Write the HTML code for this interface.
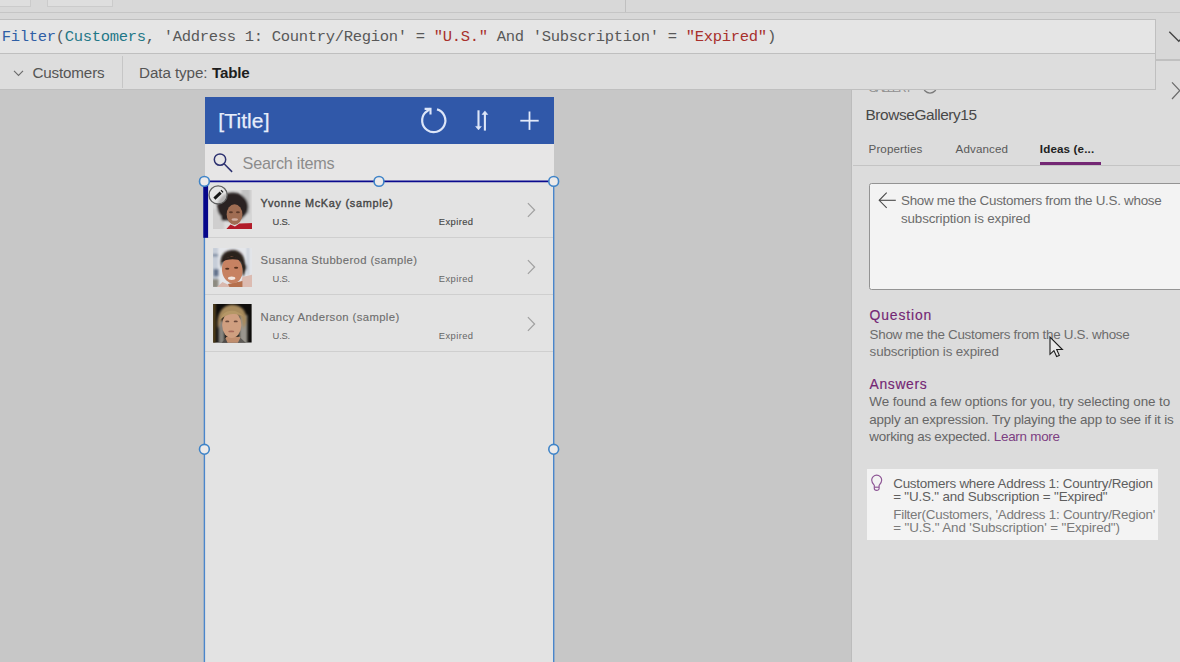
<!DOCTYPE html>
<html lang="en">
<head>
<meta charset="utf-8">
<title>Power Apps Studio - Ideas</title>
<style>
html,body{margin:0;padding:0;overflow:hidden}
body{width:1180px;height:662px;background:#c7c7c7}
#app{position:relative;width:1180px;height:662px;overflow:hidden;background:#c7c7c7;font-family:"Liberation Sans",sans-serif}
.t{position:absolute;white-space:pre;line-height:1;margin:0;padding:0}
.m{font-family:"Liberation Mono",monospace}
.a{position:absolute;box-sizing:border-box}
svg{position:absolute;overflow:visible}
#canvas{left:0;top:89px;width:853px;height:573px;background:#c7c7c7}
#phone{left:205px;top:96.5px;width:348.5px;height:566px;background:#e3e3e3}
#phead{left:0;top:0;width:348.5px;height:47.5px;background:#3058a9}
#psearch{left:0;top:47.5px;width:348.5px;height:37px;background:#e7e6e6}
.sep{left:0;width:348.5px;height:1px;background:#cfcfcf}
#rpanel{left:851.4px;top:60px;width:330px;height:602px;background:#dcdcdc;border-left:1.6px solid #bcbcbc}
#tabline{left:853px;top:164.5px;width:327px;height:1px;background:#c4c4c4}
#tabul{left:1040px;top:162px;width:60.6px;height:3px;background:#742774}
#qbox{left:869.2px;top:182.6px;width:320px;height:107.7px;background:#f3f3f3;border:1.6px solid #939393;border-radius:2.5px}
#card{left:866.5px;top:469px;width:291.5px;height:71px;background:#f3f3f3}
#topstrip{left:0;top:0;width:1180px;height:60px;background:#d8d8d8}
#topline{left:0;top:12px;width:1180px;height:1px;background:#c5c5c5}
#topdiv{left:625.2px;top:0;width:1px;height:12px;background:#c0c0c0}
.tab{top:-1px;height:7.5px;background:#dedede;border:1px solid #cbcbcb}
#fbar{left:-2px;top:19.2px;width:1157.5px;height:34.6px;background:#e5e5e5;border:1.4px solid #bfbfbf}
#sbar{left:-2px;top:52.6px;width:1157.5px;height:37.8px;background:#dddddd;border:1.4px solid #bfbfbf}
#sdiv{left:121.7px;top:56px;width:1px;height:32px;background:#c6c6c6}
#rline{left:1155px;top:59.4px;width:25px;height:1.3px;background:#c0c0c0}
#formula{left:1.7px;top:29.7px;font-family:"Liberation Mono",monospace;font-size:15.5px;letter-spacing:-0.3px;color:#585858}
</style>
</head>
<body>
<div id="app">
<!-- design canvas -->
<div class="a" id="canvas"></div>

<!-- phone preview -->
<div class="a" id="phone">
  <div class="a" id="phead"></div>
  <div class="a" id="psearch"></div>
  <div class="a sep" style="top:140.5px"></div>
  <div class="a sep" style="top:197.5px"></div>
  <div class="a sep" style="top:254.5px"></div>
</div>
<!-- avatars -->
<svg style="left:213.2px;top:190.3px" width="38.9" height="38.9" viewBox="0 0 39 39">
  <defs>
    <filter id="bl1" x="-10%" y="-10%" width="120%" height="120%"><feGaussianBlur stdDeviation="0.7"/></filter>
    <filter id="bl2" x="-10%" y="-10%" width="120%" height="120%"><feGaussianBlur stdDeviation="1.1"/></filter>
    <clipPath id="cp"><rect x="0" y="0" width="39" height="39"/></clipPath>
  </defs>
  <g clip-path="url(#cp)">
    <rect width="39" height="39" fill="#dddcdc"/>
    <g filter="url(#bl2)">
      <rect x="28.5" y="-2" width="9" height="33" fill="#c2c2c2"/>
      <rect x="-2" y="19" width="13" height="22" fill="#cfcece"/>
      <rect x="30" y="24" width="10" height="9" fill="#d6d6d6"/>
      <ellipse cx="19.8" cy="17" rx="15.6" ry="14.4" fill="#2a2321"/>
      <ellipse cx="11" cy="27" rx="3" ry="4" fill="#2a2321"/>
    </g>
    <g filter="url(#bl1)">
      <ellipse cx="21.6" cy="24.6" rx="7.9" ry="10.4" fill="#a06d52"/>
      <ellipse cx="18" cy="22.3" rx="2" ry="0.9" fill="#5d3a2c"/>
      <ellipse cx="25" cy="22.3" rx="2" ry="0.9" fill="#5d3a2c"/>
      <ellipse cx="21.8" cy="29.6" rx="3.2" ry="1.3" fill="#d2b0a4"/>
      <path d="M12.5 40 L17.5 34.5 L22 36.5 L26.5 33.6 L40 33 L40 40 Z" fill="#b21f29"/>
    </g>
  </g>
</svg>
<svg style="left:213.2px;top:247.5px" width="38.9" height="38.9" viewBox="0 0 39 39">
  <g clip-path="url(#cp)">
    <rect width="39" height="39" fill="#e4e6ea"/>
    <g filter="url(#bl2)">
      <rect x="-1" y="-1" width="6" height="41" fill="#c6cdd8"/>
      <rect x="-1" y="6" width="6" height="2.5" fill="#7c8aa0"/>
      <rect x="0.5" y="21" width="5" height="7.5" fill="#5f708a"/>
      <rect x="-1" y="31" width="6.5" height="9" fill="#8c8a80"/>
      <rect x="34" y="-1" width="2.2" height="28" fill="#c6cdd8"/>
      <path d="M8.5 20 C5 8 12 1.5 20.5 2 C28.5 2.5 31.5 9 32.5 16 C34.3 18 34 22 32.3 23 C32 26 31 28 30 28.5 L27 14 L10 14 Z" fill="#2c211f"/>
    </g>
    <g filter="url(#bl1)">
      <path d="M3 40 L9.5 34 L16 37 L22 40 Z" fill="#d9b8ae"/>
      <path d="M27 40 L29.5 29 L40 26.5 L40 40 Z" fill="#dcbbb1"/>
      <path d="M15 36 L29.5 33 L29.5 40 L17 40 Z" fill="#b5704e"/>
      <ellipse cx="19.3" cy="22" rx="10.3" ry="13.4" fill="#c78262" transform="rotate(-7 19.3 22)"/>
      <path d="M8.5 14 C12 7.5 25 6.5 30 13.5 C24.5 10.5 14 10.5 8.5 14Z" fill="#2c211f"/>
      <ellipse cx="18.7" cy="30.3" rx="3.7" ry="1.7" fill="#f1e6e0"/>
      <ellipse cx="14.3" cy="20.8" rx="2.1" ry="0.9" fill="#56301f"/>
      <ellipse cx="23.2" cy="19.8" rx="2.1" ry="0.9" fill="#56301f"/>
    </g>
  </g>
</svg>
<svg style="left:213.2px;top:304.2px" width="38.9" height="38.7" viewBox="0 0 39 39">
  <g clip-path="url(#cp)">
    <rect width="39" height="39" fill="#0f0d0b"/>
    <g filter="url(#bl2)">
      <rect x="-1" y="-1" width="3.6" height="41" fill="#54421c"/>
      <rect x="5.5" y="17" width="6" height="23" fill="#86847f"/>
      <rect x="26.5" y="11" width="8" height="29" fill="#9a968e"/>
      <path d="M5 25 C3 9 10 0.5 20 0.8 C29.5 1.2 34 8 33.5 17 C33.3 20 32 23 30.5 25 L28 12 L9.5 13 Z" fill="#a88b5d"/>
    </g>
    <g filter="url(#bl1)">
      <path d="M9 40 L13.5 33 L27 33 L30 40 Z" fill="#c08e6e"/>
      <path d="M8 40 L12.5 34.5 L15 40 Z" fill="#4f4c49"/>
      <path d="M24.5 40 L27.5 34 L34 40 Z" fill="#5f5c58"/>
      <ellipse cx="18.8" cy="21.2" rx="9.7" ry="13.2" fill="#cf9f80"/>
      <path d="M7 16 C9.5 5.5 23 3.5 31 12.5 C25 8.5 13 9 7 16Z" fill="#b59766"/>
      <ellipse cx="14.3" cy="17.6" rx="2.1" ry="0.9" fill="#6b4a3a"/>
      <ellipse cx="22.8" cy="17.6" rx="2.1" ry="0.9" fill="#6b4a3a"/>
      <ellipse cx="18.3" cy="27.6" rx="3.1" ry="0.9" fill="#a86a5a"/>
    </g>
  </g>
</svg>

<span class="t" id="ph_title" style="left:218.30px;top:110.35px;font-size:21px;color:#e6edfb;letter-spacing:0.105px;-webkit-text-stroke:0.25px #e6edfb;">[Title]</span>
<span class="t" id="ph_search" style="left:242.60px;top:155.13px;font-size:16.2px;color:#8c8c8c;letter-spacing:-0.222px;">Search items</span>
<span class="t" id="ph_n1" style="left:260.60px;top:197.94px;font-size:10.9px;color:#474747;letter-spacing:0.703px;-webkit-text-stroke:0.38px #474747;">Yvonne McKay (sample)</span>
<span class="t" id="ph_n2" style="left:260.60px;top:255.40px;font-size:11.3px;color:#6e6e6e;letter-spacing:0.379px;-webkit-text-stroke:0.12px #6e6e6e;">Susanna Stubberod (sample)</span>
<span class="t" id="ph_n3" style="left:260.60px;top:312.19px;font-size:11.3px;color:#6e6e6e;letter-spacing:0.392px;-webkit-text-stroke:0.12px #6e6e6e;">Nancy Anderson (sample)</span>
<span class="t" id="ph_us0" style="left:272.60px;top:217.01px;font-size:9.4px;color:#474747;letter-spacing:-0.209px;-webkit-text-stroke:0.15px #474747;">U.S.</span>
<span class="t" id="ph_ex0" style="left:438.80px;top:217.01px;font-size:9.4px;color:#474747;letter-spacing:0.415px;-webkit-text-stroke:0.15px #474747;">Expired</span>
<span class="t" id="ph_us1" style="left:272.60px;top:273.81px;font-size:9.4px;color:#666;letter-spacing:-0.209px;">U.S.</span>
<span class="t" id="ph_ex1" style="left:438.80px;top:273.81px;font-size:9.4px;color:#666;letter-spacing:0.415px;">Expired</span>
<span class="t" id="ph_us2" style="left:272.60px;top:330.61px;font-size:9.4px;color:#666;letter-spacing:-0.209px;">U.S.</span>
<span class="t" id="ph_ex2" style="left:438.80px;top:330.61px;font-size:9.4px;color:#666;letter-spacing:0.415px;">Expired</span>
<!-- phone header / search / list icons and selection adorners -->
<svg style="left:0;top:0" width="1180" height="662" viewBox="0 0 1180 662">
  <!-- refresh -->
  <g fill="none" stroke="#dde6f8" stroke-width="2.2" stroke-linecap="butt">
    <path d="M437.0 109.4 A11.6 11.6 0 1 1 425.3 112.6 L430.3 108.6"/>
    <path d="M424.6 108.9 L430.5 108.9 L430.5 114.6" stroke-width="2.1"/>
  </g>
  <!-- sort -->
  <g stroke="#dde6f8" stroke-width="2.1" fill="#dde6f8">
    <line x1="478.5" y1="110.3" x2="478.5" y2="127.5"/>
    <path d="M475.6 126.4 L481.4 126.4 L478.5 129.9 Z" stroke-width="0.5"/>
    <line x1="484.9" y1="113.5" x2="484.9" y2="130.6"/>
    <path d="M482.0 114.5 L487.8 114.5 L484.9 110.9 Z" stroke-width="0.5"/>
  </g>
  <!-- plus -->
  <g stroke="#e3eafa" stroke-width="1.8">
    <line x1="520.3" y1="120.7" x2="538.7" y2="120.7"/>
    <line x1="529.5" y1="111.5" x2="529.5" y2="129.9"/>
  </g>
  <!-- search -->
  <g fill="none" stroke="#2d3270" stroke-width="1.5">
    <circle cx="220" cy="159.6" r="5.7"/>
    <line x1="224.1" y1="163.8" x2="232.1" y2="171.9"/>
  </g>
  <!-- row chevrons -->
  <g fill="none" stroke="#a0a0a0" stroke-width="1.2">
    <path d="M527.9 203.2 L534.6 210 L527.9 216.8"/>
    <path d="M527.9 260.2 L534.6 267 L527.9 273.8"/>
    <path d="M527.9 317.2 L534.6 324 L527.9 330.8"/>
  </g>
  <!-- selection -->
  <g stroke="#4a86cb" stroke-width="1.4">
    <line x1="204.4" y1="181" x2="204.4" y2="662"/>
    <line x1="553.7" y1="181" x2="553.7" y2="662"/>
  </g>
  <rect x="203.3" y="182" width="4.8" height="55.8" fill="#06068a"/>
  <line x1="204" y1="181.4" x2="554" y2="181.4" stroke="#0a0a8e" stroke-width="1.7"/>
  <g fill="#eceaea" stroke="#3f84c8" stroke-width="1.6">
    <circle cx="204.4" cy="181.4" r="4.9"/>
    <circle cx="379" cy="181.4" r="4.9"/>
    <circle cx="553.7" cy="181.4" r="4.9"/>
    <circle cx="204.4" cy="449.3" r="4.9"/>
    <circle cx="553.7" cy="449.3" r="4.9"/>
  </g>
  <!-- edit pencil -->
  <circle cx="218.1" cy="194.9" r="9.1" fill="#e8e8e8" fill-opacity="0.72" stroke="#606060" stroke-width="1.3"/>
  <path d="M214.4 198.6 L220.7 192.6" stroke="#151515" stroke-width="2.9" fill="none"/>
  <path d="M221.6 191.8 L222.5 190.9" stroke="#151515" stroke-width="2.9" fill="none"/>
</svg>


<!-- right properties panel -->
<div class="a" id="rpanel"></div>
<div class="a" id="tabline"></div>
<div class="a" id="tabul"></div>
<div class="a" id="qbox"></div>
<div class="a" id="card"></div>
<span class="t" id="rp_gal" style="left:868.50px;top:83.22px;font-size:11.5px;color:#8e8e8e;letter-spacing:-1.480px;">GALLERY</span>
<span class="t" id="rp_name" style="left:865.50px;top:106.61px;font-size:15.4px;color:#484848;letter-spacing:-0.400px;">BrowseGallery15</span>
<span class="t" id="rp_tab1" style="left:868.60px;top:143.04px;font-size:11.6px;color:#5a5a5a;letter-spacing:0.086px;">Properties</span>
<span class="t" id="rp_tab2" style="left:955.60px;top:143.04px;font-size:11.6px;color:#5a5a5a;letter-spacing:0.103px;">Advanced</span>
<span class="t" id="rp_tab3" style="left:1039.80px;top:143.04px;font-size:11.6px;color:#222;font-weight:bold;letter-spacing:0.151px;">Ideas (e...</span>
<span class="t" id="rp_box1" style="left:901.00px;top:193.91px;font-size:13.4px;color:#6c6c6c;letter-spacing:-0.274px;">Show me the Customers from the U.S. whose</span>
<span class="t" id="rp_box2" style="left:901.00px;top:212.01px;font-size:13.4px;color:#6c6c6c;letter-spacing:-0.143px;">subscription is expired</span>
<span class="t" id="rp_q" style="left:869.60px;top:308.69px;font-size:13.9px;color:#742774;letter-spacing:0.874px;-webkit-text-stroke:0.15px #742774;">Question</span>
<span class="t" id="rp_q1" style="left:869.60px;top:328.21px;font-size:13.4px;color:#6c6c6c;letter-spacing:-0.289px;">Show me the Customers from the U.S. whose</span>
<span class="t" id="rp_q2" style="left:869.60px;top:344.71px;font-size:13.4px;color:#6c6c6c;letter-spacing:-0.147px;">subscription is expired</span>
<span class="t" id="rp_a" style="left:869.60px;top:378.19px;font-size:13.9px;color:#742774;letter-spacing:0.619px;-webkit-text-stroke:0.15px #742774;">Answers</span>
<span class="t" id="rp_a1" style="left:869.30px;top:395.01px;font-size:13.4px;color:#666;letter-spacing:-0.064px;">We found a few options for you, try selecting one to</span>
<span class="t" id="rp_a2" style="left:869.30px;top:413.31px;font-size:13.4px;color:#666;letter-spacing:-0.177px;">apply an expression. Try playing the app to see if it is</span>
<span class="t" id="rp_a3" style="left:869.30px;top:429.61px;font-size:13.4px;color:#666;letter-spacing:-0.242px;">working as expected. <span style="color:#7d3f82">Learn more</span></span>
<span class="t" id="rp_c1" style="left:893.20px;top:477.11px;font-size:13.4px;color:#5e5e5e;letter-spacing:-0.222px;">Customers where Address 1: Country/Region</span>
<span class="t" id="rp_c2" style="left:893.20px;top:490.41px;font-size:13.4px;color:#5e5e5e;letter-spacing:-0.177px;">= "U.S." and Subscription = "Expired"</span>
<span class="t" id="rp_c3" style="left:893.20px;top:507.81px;font-size:13.4px;color:#7a7a7a;letter-spacing:-0.233px;">Filter(Customers, 'Address 1: Country/Region'</span>
<span class="t" id="rp_c4" style="left:893.20px;top:520.81px;font-size:13.4px;color:#7a7a7a;letter-spacing:-0.111px;">= "U.S." And 'Subscription' = "Expired")</span>
<svg style="left:0;top:0" width="1180" height="662" viewBox="0 0 1180 662">
  <!-- info circle (clipped under bar) -->
  <circle cx="930" cy="86.2" r="6.9" fill="none" stroke="#7a7a7a" stroke-width="1.3"/>
  <!-- back arrow -->
  <g fill="none" stroke="#4a4a4a" stroke-width="1.1">
    <line x1="879.2" y1="200.3" x2="895.8" y2="200.3"/>
    <path d="M886.7 192.7 L879.2 200.3 L886.7 207.8"/>
  </g>
  <!-- lightbulb -->
  <g fill="none" stroke="#8d5595" stroke-width="1.15" stroke-linejoin="round">
    <path d="M874.3 488.5 L874.3 485.3 C872.9 484 871.7 482.4 871.7 480.1 A5 5 0 0 1 881.7 480.1 C881.7 482.4 880.5 484 879.1 485.3 L879.1 488.5 A2.4 1.9 0 0 1 874.3 488.5 Z"/>
    <path d="M874.3 487.2 L879.1 487.2"/>
  </g>
  <!-- mouse cursor -->
  <path d="M1050 337 L1050 354.3 L1053.9 350.6 L1056.6 356.6 L1059.3 355.4 L1056.7 349.5 L1062.4 349.5 Z" fill="#e9e9e9" stroke="#1c1c1c" stroke-width="1.1" stroke-linejoin="miter"/>
</svg>


<!-- top bars -->
<div class="a" id="topstrip"></div>
<div class="a tab" style="left:-1px;width:32px"></div>
<div class="a tab" style="left:47px;width:65.5px"></div>
<div class="a" id="topline"></div>
<div class="a" id="topdiv"></div>
<div class="a" id="fbar"></div>
<div class="a" id="sbar"></div>
<div class="a" id="sdiv"></div>
<div class="a" id="rline"></div>
<span class="t" id="formula"><span style="color:#2f5fa5">Filter</span>(<span style="color:#1f7888">Customers</span>, 'Address 1: Country/Region' = <span style="color:#a8302c">"U.S."</span> And 'Subscription' = <span style="color:#a8302c">"Expired"</span>)</span>
<span class="t" id="bar_cust" style="left:32.50px;top:64.88px;font-size:15.2px;color:#555;letter-spacing:-0.160px;">Customers</span>
<span class="t" id="bar_dt" style="left:139.00px;top:64.68px;font-size:15.2px;color:#555;letter-spacing:-0.073px;">Data type:</span>
<span class="t" id="bar_tb" style="left:212.00px;top:64.68px;font-size:15.2px;color:#1e1e1e;font-weight:bold;letter-spacing:-0.209px;">Table</span>
<svg style="left:0;top:0" width="1180" height="110" viewBox="0 0 1180 110">
  <path d="M14 70.8 L18.5 75.4 L23 70.8" fill="none" stroke="#6a6a6a" stroke-width="1.1"/>
  <path d="M1169.3 31.7 L1178.8 41.2 L1188 32" fill="none" stroke="#444" stroke-width="1.4"/>
  <path d="M1172 82.3 L1179.7 90.6 L1172 99" fill="none" stroke="#6a6a6a" stroke-width="1.2"/>
</svg>

</div>
</body>
</html>
